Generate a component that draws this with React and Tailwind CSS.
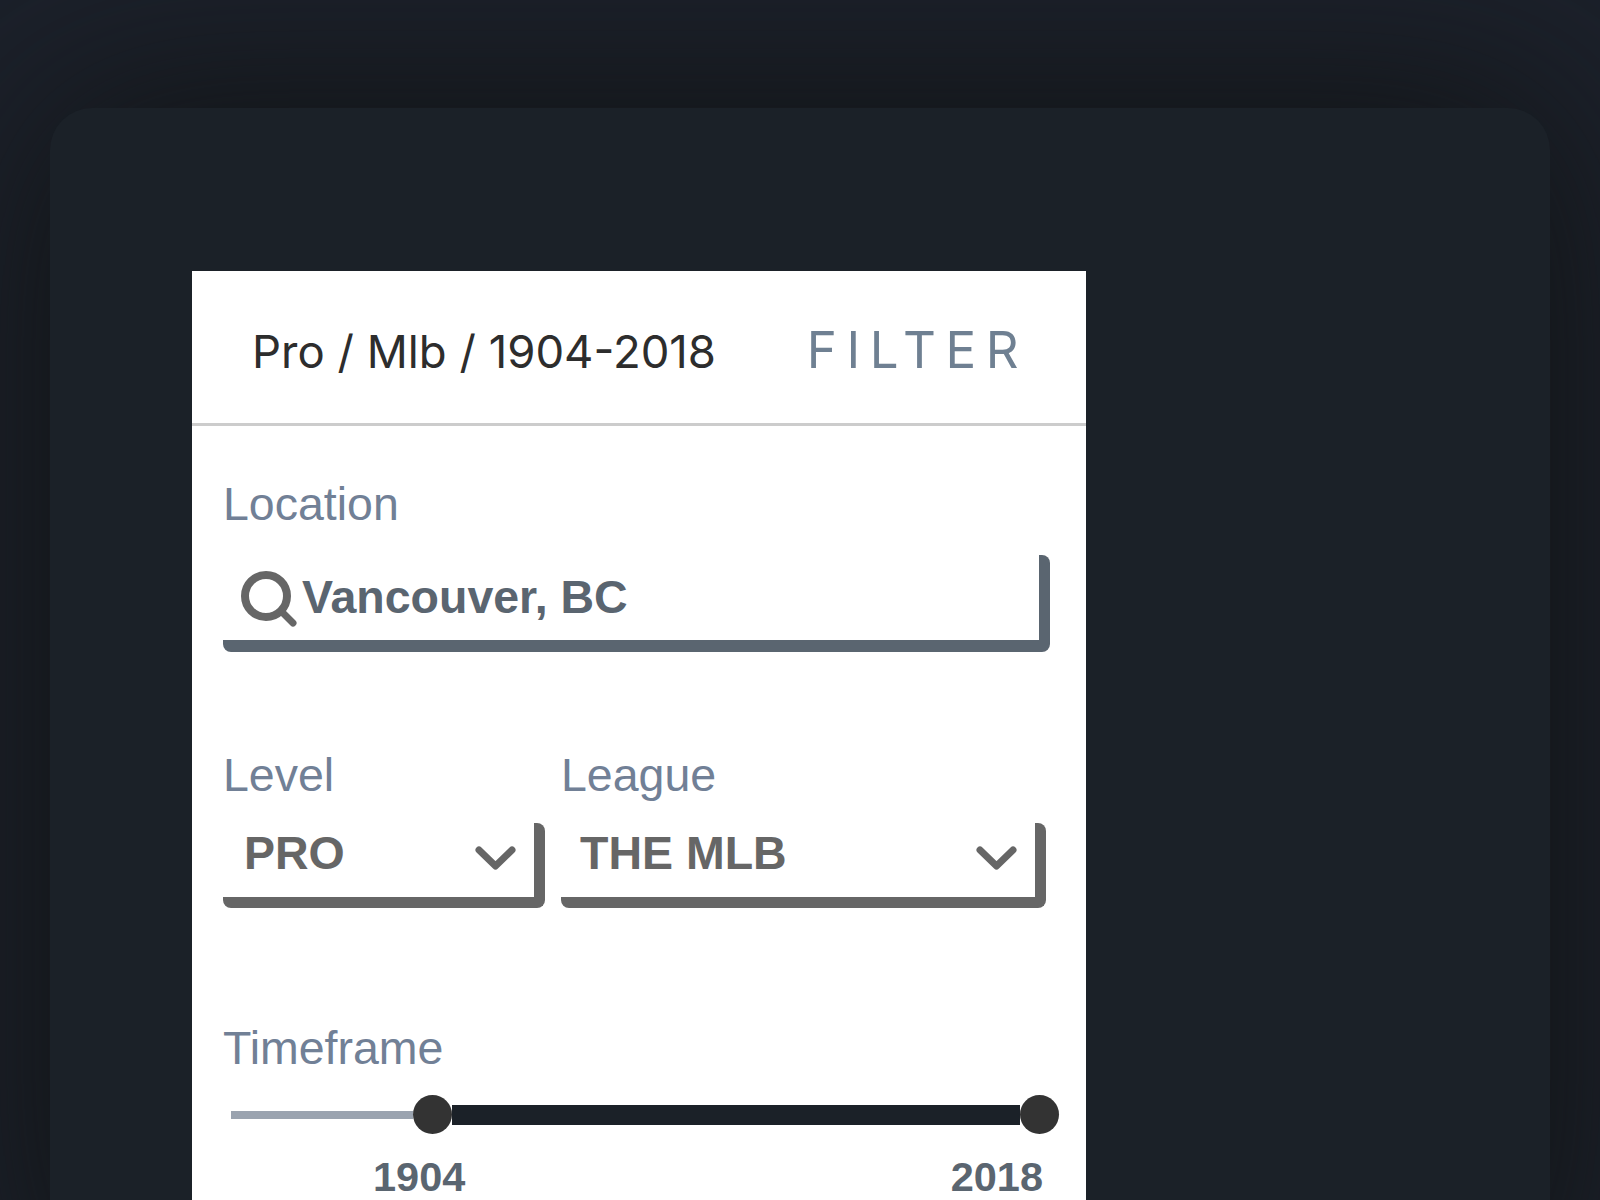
const labelClass = "block text-[46.5px] leading-[52px] text-[#718096]";

function Chevron() {
  return (
    <svg width="41" height="25" viewBox="0 0 41 25" fill="none" className="shrink-0">
      <path d="M4 5l16.5 16L37 5" stroke="currentColor" strokeWidth="7" strokeLinecap="round" strokeLinejoin="round" />
    </svg>
  );
}

function SelectBox({ value, className }) {
  return (
    <div className={`flex h-[85px] items-start justify-between rounded-[8px] border-r-[11px] border-b-[11px] border-[#666] text-[46.5px] leading-[52px] font-bold text-[#666] ${className}`}>
      <span className="pt-[4px]">{value}</span>
      <span className="pt-[22px]"><Chevron /></span>
    </div>
  );
}

export default function App() {
  return (
    <div className="h-[1200px] overflow-hidden bg-[#1c212b] px-[50px] pt-[108px] font-['Liberation_Sans',Arial,sans-serif]">
      <div className="h-[1200px] rounded-t-[42px] bg-[#1b2128] pt-[163px] pl-[142px] shadow-[0_0_200px_#101212]">
        <div className="h-[1000px] w-[894px] bg-white">
          <div className="flex h-[155px] items-center justify-between border-b-[3px] border-[#ccc] pt-[10px] pr-[58px] pl-[60px] font-['Inter',sans-serif]">
            <span className="text-[45.5px] text-[#2d2d2d]">Pro / Mlb / 1904-2018</span>
            <span className="pb-[4px] text-[51px] tracking-[9.5px] text-[#6f8092]">FILTER</span>
          </div>

          <div className="pt-[52px] pl-[31px]">
            <label className={labelClass}>Location</label>
            <div className="mt-[25px] flex h-[97px] w-[827px] items-start rounded-[8px] border-r-[11px] border-b-[12px] border-[#5a6570] pt-[16px] pl-[18px]">
              <svg width="56" height="56" viewBox="0 0 56 56" fill="none" className="shrink-0 text-[#666]">
                <circle cx="25" cy="25" r="21" stroke="currentColor" strokeWidth="8" />
                <path d="M41 41l11 11" stroke="currentColor" strokeWidth="7" strokeLinecap="round" />
              </svg>
              <span className="ml-[5px] text-[46.5px] leading-[52px] font-bold text-[#5a6570]">Vancouver, BC</span>
            </div>

            <div className="mt-[97px] flex gap-[16px]">
              <div className="w-[322px]">
                <label className={labelClass}>Level</label>
                <SelectBox value="PRO" className="mt-[22px] pr-[18px] pl-[21px]" />
              </div>
              <div className="w-[485px]">
                <label className={labelClass}>League</label>
                <SelectBox value="THE MLB" className="mt-[22px] pr-[18px] pl-[19px]" />
              </div>
            </div>

            <div className="mt-[114px]">
              <label className={labelClass}>Timeframe</label>
              <div className="mt-[21px] flex items-center pl-[8px]">
                <div className="h-[8px] w-[182px] bg-[#9aa3af]" />
                <div className="size-[39px] rounded-full bg-[#333]" />
                <div className="h-[20px] w-[568px] bg-[#1b2128]" />
                <div className="size-[39px] rounded-full bg-[#333]" />
              </div>
              <div className="mt-[19px] flex w-[820px] justify-between pl-[150px] text-[41.5px] leading-[48px] font-bold text-[#5a6570]">
                <span>1904</span>
                <span>2018</span>
              </div>
            </div>
          </div>
        </div>
      </div>
    </div>
  );
}
